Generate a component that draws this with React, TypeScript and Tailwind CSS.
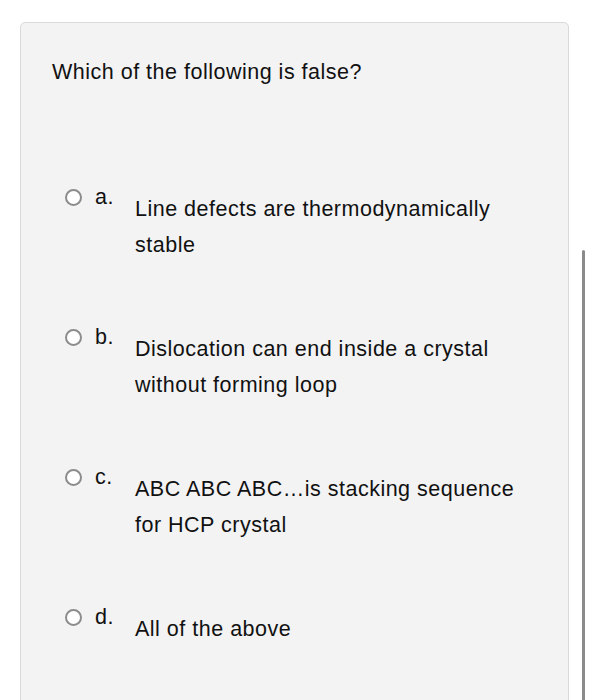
const options = [
  { key: "a.", text: "Line defects are thermodynamically stable" },
  { key: "b.", text: "Dislocation can end inside a crystal without forming loop" },
  { key: "c.", text: "ABC ABC ABC…is stacking sequence for HCP crystal" },
  { key: "d.", text: "All of the above" },
];

export default function App() {
  return (
    <div className="relative h-[700px] w-[591px] overflow-hidden bg-white pt-[22px] pl-[20px] font-['Liberation_Sans',Arial,sans-serif] text-[21.5px] tracking-[0.5px] text-[#111]">
      <div className="h-[720px] w-[549px] rounded-[5px] border border-[#d9d9d9] bg-[#f3f3f3] pt-[35px] pl-[31px]">
        <p className="mb-[94px] leading-[28px]">Which of the following is false?</p>
        {options.map((o) => (
          <div key={o.key} className="flex h-[140px] items-start">
            <span className="ml-[13px] mt-[9px] h-[17px] w-[17px] shrink-0 rounded-full border-2 border-[#8c8c8c] bg-white" />
            <span className="ml-[13px] w-[40px] shrink-0 leading-[34px]">{o.key}</span>
            <span className="mt-[11px] w-[400px] leading-[36px]">{o.text}</span>
          </div>
        ))}
      </div>
      <div className="absolute left-[582px] top-[250px] h-[460px] w-[3px] rounded-full bg-[#8a8a8a]" />
    </div>
  );
}
